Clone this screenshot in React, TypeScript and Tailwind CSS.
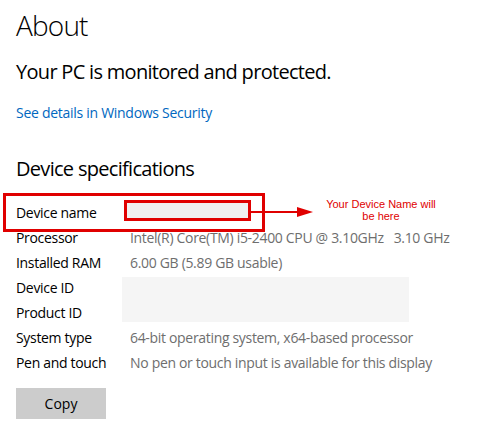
import React from "react";

const rows: [string, string][] = [
  ["Device name", ""],
  ["Processor", "Intel(R) Core(TM) i5-2400 CPU @ 3.10GHz   3.10 GHz"],
  ["Installed RAM", "6.00 GB (5.89 GB usable)"],
  ["Device ID", ""],
  ["Product ID", ""],
  ["System type", "64-bit operating system, x64-based processor"],
  ["Pen and touch", "No pen or touch input is available for this display"],
];

export default function App() {
  return (
    <div
      className="relative w-[477px] h-[428px] bg-white overflow-hidden pl-4 text-black"
      style={{ fontFamily: '"Open Sans", "Noto Sans", sans-serif' }}
    >
      <h1 className="pt-[7px] text-[28px] leading-[36px] font-light tracking-[-0.03em]">About</h1>
      <p className="mt-[15px] text-[20px] leading-[28px] tracking-[-0.035em]">Your PC is monitored and protected.</p>
      <a className="block mt-[17px] text-[14px] leading-[20px] text-[#0067c0] tracking-[-0.02em]">See details in Windows Security</a>
      <h2 className="mt-[32px] text-[20px] leading-[28px] tracking-[-0.035em]">Device specifications</h2>
      <div className="mt-[17px] flex flex-col tracking-[-0.02em]">
        {rows.map(([k, v]) => (
          <div key={k} className="flex h-[25px] text-[14px] leading-[25px]">
            <div className="w-[114px] shrink-0">{k}</div>
            <div className="text-[#6e6e6e] whitespace-pre">{v}</div>
          </div>
        ))}
      </div>
      <button className="mt-[13px] w-[90px] h-[31px] bg-[#cccccc] text-[14px]">Copy</button>

      {/* redaction block */}
      <div className="absolute left-[122px] top-[277px] w-[287px] h-[45px] bg-[#f5f5f5]" />

      {/* annotation */}
      <div className="absolute left-[3px] top-[193px] w-[262px] h-[39px] border-[3px] border-[#e00000]" />
      <div className="absolute left-[124px] top-[200px] w-[127px] h-[21px] border-[3px] border-[#e00000] bg-[#f0f0f0]" />
      <div className="absolute left-[251px] top-[211px] w-[48px] h-[2px] bg-[#e00000]" />
      <svg className="absolute left-[297px] top-[207px]" width="16" height="10" viewBox="0 0 16 10">
        <polygon points="0,0 16,5 0,10" fill="#e00000" />
      </svg>
      <div
        className="absolute left-[318px] top-[198px] w-[126px] text-center text-[11px] leading-[12px] text-[#e00000]"
        style={{ fontFamily: '"Liberation Sans", Arial, sans-serif' }}
      >
        Your Device Name will
        <br />
        be here
      </div>
    </div>
  );
}
